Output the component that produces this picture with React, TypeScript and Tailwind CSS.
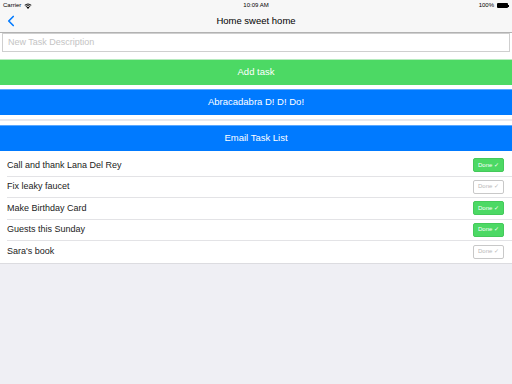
import { ChevronLeft } from 'lucide-react';

type Task = { title: string; done: boolean };

const TASKS: Task[] = [
  { title: 'Call and thank Lana Del Rey', done: true },
  { title: 'Fix leaky faucet', done: false },
  { title: 'Make Birthday Card', done: true },
  { title: 'Guests this Sunday', done: true },
  { title: "Sara's book", done: false },
];

function Wifi() {
  return (
    <svg width="8" height="6" viewBox="0 0 16 12" className="ml-[3px]">
      <path d="M8 12 L5 8.6 A4.6 4.6 0 0 1 11 8.6 Z" fill="#000" />
      <path d="M3.2 6.6 A7.3 7.3 0 0 1 12.8 6.6 L11.7 7.8 A5.7 5.7 0 0 0 4.3 7.8 Z" fill="#000" />
      <path d="M1 4.2 A10.6 10.6 0 0 1 15 4.2 L13.9 5.4 A9 9 0 0 0 2.1 5.4 Z" fill="#000" />
    </svg>
  );
}

function Battery() {
  return (
    <div className="flex items-center ml-[3px]">
      <div className="w-[11px] h-[5px] bg-black rounded-[1px]" />
      <div className="w-[1px] h-[2px] bg-black" />
    </div>
  );
}

function App() {
  return (
    <div className="w-[512px] h-[384px] bg-[#efeff4] flex flex-col font-['Liberation_Sans',Arial,sans-serif] overflow-hidden">
      {/* Status + nav bar */}
      <div className="bg-[#f7f7f7] border-b border-[#b2b2b2] h-[33px] flex flex-col">
        <div className="h-[11px] flex items-center justify-between px-[3px] text-[6px] text-black">
          <div className="flex items-center w-[100px]">
            Carrier
            <Wifi />
          </div>
          <div className="font-medium">10:09 AM</div>
          <div className="flex items-center justify-end w-[100px]">
            100%
            <Battery />
          </div>
        </div>
        <div className="relative flex-1 flex items-center justify-center">
          <ChevronLeft className="absolute left-[2px] top-[1px] w-[18px] h-[18px] text-[#007aff]" strokeWidth={2.2} />
          <span className="text-[9.5px] text-black font-medium">Home sweet home</span>
        </div>
      </div>

      {/* Form + actions */}
      <div className="bg-white flex flex-col">
        <div className="px-[2px]">
          <div className="h-[19px] border border-[#cfcfcf] flex items-center px-[5px] text-[9px] text-[#c4c4c4] bg-white">
            New Task Description
          </div>
        </div>
        <div className="h-[7px]" />
        <div className="h-[26px] bg-[#4cd964] border-t border-[#b6ecbf] flex items-center justify-center text-white text-[9.5px]">
          Add task
        </div>
        <div className="h-[4px]" />
        <div className="h-[26px] bg-[#007aff] border-t border-[#5aa8ff] flex items-center justify-center text-white text-[9.5px]">
          Abracadabra D! D! Do!
        </div>
        <div className="h-[4px]" />
        <div className="h-[2px] bg-[#e9e9ee]" />
        <div className="h-[4px]" />
        <div className="h-[26px] bg-[#007aff] border-t border-[#5aa8ff] flex items-center justify-center text-white text-[9.5px]">
          Email Task List
        </div>
      </div>

      {/* Task list */}
      <div className="bg-white pt-[4px] border-b border-[#dcdce0]">
        {TASKS.map((t, i) => (
          <div key={i} className="pl-[7px]">
            <div
              className={`h-[21.5px] flex items-center justify-between pr-[8px] ${
                i < TASKS.length - 1 ? 'border-b border-[#e3e3e6]' : ''
              }`}
            >
              <span className="text-[9px] text-[#222]">{t.title}</span>
              <div
                className={`w-[31px] h-[14px] rounded-[2px] flex items-center justify-center text-[6px] ${
                  t.done
                    ? 'bg-[#4cd964] border border-[#45c95b] text-white'
                    : 'bg-white border border-[#c8c8c8] text-[#b8b8b8]'
                }`}
              >
                Done ✓
              </div>
            </div>
          </div>
        ))}
      </div>
    </div>
  );
}

export default App;
